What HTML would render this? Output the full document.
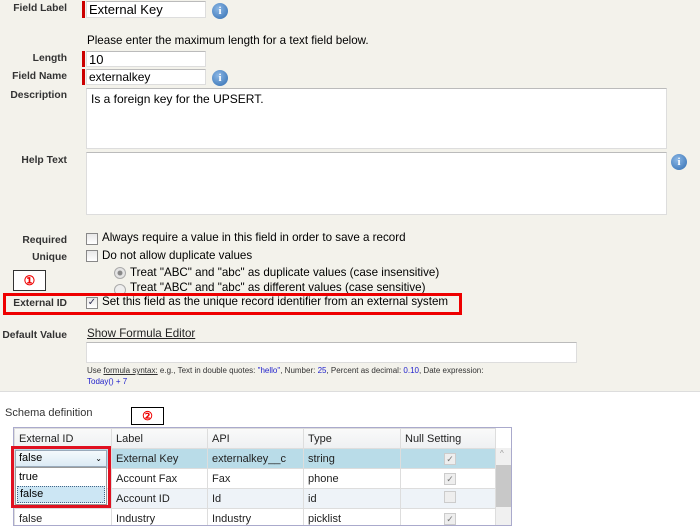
<!DOCTYPE html>
<html><head><meta charset="utf-8"><style>
*{margin:0;padding:0;box-sizing:border-box}
body{width:700px;height:528px;overflow:hidden;background:#fff;font-family:"Liberation Sans",Arial,sans-serif;font-size:11.6px;color:#000;position:relative}
.top{position:absolute;left:0;top:0;width:700px;height:392px;background:#f3f2eb;border-bottom:1px solid #ddd}
.a{position:absolute;white-space:nowrap}
.lbl{position:absolute;right:633px;font-weight:bold;font-size:10.3px;color:#333;white-space:nowrap}
.inp{position:absolute;background:#fff;border:1px solid #ddd;border-top-color:#bbb;font-size:13px;padding-left:2px;line-height:15px}
.bar{position:absolute;width:3px;background:#c00}
.info{position:absolute;width:16px;height:16px;border-radius:50%;background:radial-gradient(circle at 40% 35%,#8cb8e6,#2f6cb0);color:#fff;font:bold 11px "Liberation Serif",serif;text-align:center;line-height:16px}
.cb{position:absolute;width:12px;height:12px;border:1px solid #888;background:linear-gradient(#e8e8e8,#fff)}
.rad{position:absolute;width:12px;height:12px;border-radius:50%;border:1px solid #aaa;background:#eee}
table{border-collapse:collapse;font-family:"Liberation Sans",sans-serif;font-size:11px}
td{border:1px solid #ddd;height:20px;padding-left:4px;color:#222}
.ck{display:inline-block;width:12px;height:12px;border:1px solid #ccc;background:#eee;font-size:9px;line-height:10px;text-align:center;color:#777}
</style></head><body>
<div class="top"></div>
<div class="lbl" style="top:3px">Field Label</div>
<div class="bar" style="left:82px;top:1px;height:17px"></div>
<div class="inp" style="left:86px;top:1px;width:120px;height:17px">External Key</div>
<div class="info" style="left:212px;top:3px">i</div>
<div class="a" style="left:87px;top:34px">Please enter the maximum length for a text field below.</div>
<div class="lbl" style="top:53px">Length</div>
<div class="bar" style="left:82px;top:51px;height:16px"></div>
<div class="inp" style="left:86px;top:51px;width:120px;height:16px">10</div>
<div class="lbl" style="top:71px">Field Name</div>
<div class="bar" style="left:82px;top:69px;height:16px"></div>
<div class="inp" style="left:86px;top:69px;width:120px;height:16px;font-size:12px">externalkey</div>
<div class="info" style="left:212px;top:70px">i</div>
<div class="lbl" style="top:90px">Description</div>
<div class="inp" style="left:86px;top:88px;width:581px;height:61px;padding:3px 4px;font-size:12px">Is a foreign key for the UPSERT.</div>
<div class="lbl" style="top:155px">Help Text</div>
<div class="inp" style="left:86px;top:152px;width:581px;height:63px"></div>
<div class="info" style="left:671px;top:154px">i</div>
<div class="lbl" style="top:235px">Required</div>
<div class="cb" style="left:86px;top:233px"></div>
<div class="a" style="left:102px;top:231px">Always require a value in this field in order to save a record</div>
<div class="lbl" style="top:252px">Unique</div>
<div class="cb" style="left:86px;top:250px"></div>
<div class="a" style="left:102px;top:249px">Do not allow duplicate values</div>
<div class="rad" style="left:114px;top:267px;background:radial-gradient(circle,#888 30%,#e4e4e4 40%)"></div>
<div class="a" style="left:130px;top:266px">Treat "ABC" and "abc" as duplicate values (case insensitive)</div>
<div class="a" style="left:0;top:282px;width:700px;height:11px;overflow:hidden"><div class="rad" style="left:114px;top:2px"></div><div class="a" style="left:130px;top:-1px">Treat "ABC" and "abc" as different values (case sensitive)</div></div>
<div class="a" style="left:13px;top:270px;width:33px;height:21px;background:#fff;border:1px solid #333;color:#e00;font-weight:bold;text-align:center;line-height:19px;font-size:13px">①</div>
<div class="a" style="left:3px;top:293px;width:459px;height:22px;border:3px solid #e00"></div>
<div class="lbl" style="top:298px">External ID</div>
<div class="cb" style="left:86px;top:297px;font-size:10px;line-height:10px;text-align:center;color:#335">✓</div>
<div class="a" style="left:102px;top:295px">Set this field as the unique record identifier from an external system</div>
<div class="lbl" style="top:330px">Default Value</div>
<div class="a" style="left:87px;top:327px;text-decoration:underline;color:#222">Show Formula Editor</div>
<div class="inp" style="left:86px;top:342px;width:491px;height:21px"></div>
<div class="a" style="left:87px;top:366px;font-size:8px;color:#333">Use <u>formula syntax:</u> e.g., Text in double quotes: <span style="color:#22c">"hello"</span>, Number: <span style="color:#22c">25</span>, Percent as decimal: <span style="color:#22c">0.10</span>, Date expression:</div>
<div class="a" style="left:87px;top:377px;font-size:8px;color:#22c">Today() + 7</div>
<div class="a" style="left:5px;top:407px;font-size:11px;color:#333">Schema definition</div>
<div class="a" style="left:131px;top:407px;width:33px;height:18px;border:1px solid #000;color:#e00;font-weight:bold;text-align:center;line-height:16px;font-size:12px">②</div>
<div class="a" style="left:13px;top:427px;width:499px;height:99px;border:1px solid #aac;overflow:hidden;background:#fff">
<table style="width:482px">
<tr style="background:linear-gradient(#fafafa,#eef0f2)"><td style="width:97px">External ID</td><td style="width:96px">Label</td><td style="width:96px">API</td><td style="width:97px">Type</td><td>Null Setting</td></tr>
<tr style="background:#b9dce8"><td></td><td>External Key</td><td>externalkey__c</td><td>string</td><td style="text-align:center"><span class="ck">✓</span></td></tr>
<tr><td></td><td>Account Fax</td><td>Fax</td><td>phone</td><td style="text-align:center"><span class="ck">✓</span></td></tr>
<tr style="background:#eef3f8"><td></td><td>Account ID</td><td>Id</td><td>id</td><td style="text-align:center"><span class="ck"></span></td></tr>
<tr><td>false</td><td>Industry</td><td>Industry</td><td>picklist</td><td style="text-align:center"><span class="ck">✓</span></td></tr>
</table>
<div class="a" style="left:482px;top:20px;width:16px;height:79px;background:#f0f0f0"><div style="position:absolute;top:17px;left:0;width:16px;height:42px;background:#c8c8c8"></div><div style="position:absolute;top:1px;left:4px;font-size:8px;color:#999">^</div></div>
</div>
<div class="a" style="left:15px;top:450px;width:92px;height:17px;background:linear-gradient(#f4f9fc,#dcebf5);border:1px solid #9ab;font-size:11px;padding-left:3px;line-height:15px">false<span style="position:absolute;right:4px;font-size:8px">⌄</span></div>
<div class="a" style="left:15px;top:467px;width:92px;height:38px;background:#fff;border:1px solid #999;font-size:11px"><div style="padding-left:3px;height:18px;line-height:18px">true</div><div style="margin:0 1px;height:17px;background:#cce6f4;border:1px dotted #468;padding-left:2px;line-height:15px">false</div></div>
<div class="a" style="left:11px;top:446px;width:100px;height:62px;border:3px solid #e01020"></div>
</body></html>
